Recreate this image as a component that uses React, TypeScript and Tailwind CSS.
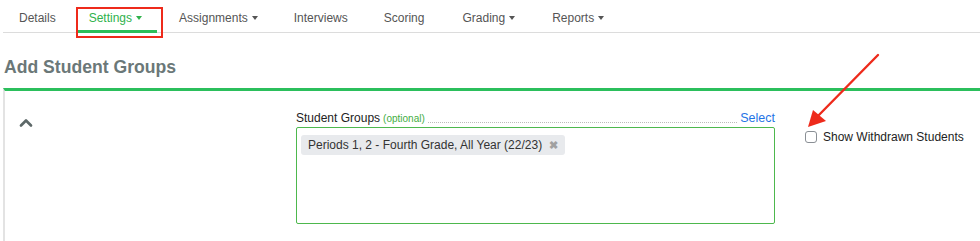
import { ChevronUp } from "lucide-react";

const TABS = [
  { label: "Details", ml: "ml-[16px]" },
  { label: "Settings", caret: true, active: true, ml: "ml-[33px]" },
  { label: "Assignments", caret: true, ml: "ml-[37px]" },
  { label: "Interviews", ml: "ml-[36px]" },
  { label: "Scoring", ml: "ml-[36px]" },
  { label: "Grading", caret: true, ml: "ml-[38px]" },
  { label: "Reports", caret: true, ml: "ml-[37px]" },
];

function Caret() {
  return (
    <span className="ml-[4px] inline-block h-0 w-0 border-x-[3.5px] border-t-[4px] border-x-transparent border-t-current align-middle" />
  );
}

export default function App() {
  return (
    <div className="relative h-[241px] w-[980px] overflow-hidden bg-white font-['Liberation_Sans',Arial,sans-serif] text-[#333]">
      {/* tabs */}
      <nav className="ml-[3px] flex h-[33px] items-start border-b border-[#dcdcdc] text-[12px] text-[#555]">
        {TABS.map((t) => (
          <div
            key={t.label}
            className={`${t.ml} flex h-[32px] items-center pt-[4px] ${
              t.active ? "relative text-[#2fb24c]" : ""
            }`}
          >
            {t.label}
            {t.caret && <Caret />}
            {t.active && (
              <span className="absolute bottom-[-1px] left-[-11px] right-[-15px] h-[3px] bg-[#2dbd5a]" />
            )}
          </div>
        ))}
      </nav>

      <h1 className="mt-[23px] ml-[4px] text-[17.6px] font-bold leading-[22px] text-[#6b7878]">
        Add Student Groups
      </h1>

      {/* card */}
      <div className="mt-[10px] ml-[3px] h-[160px] border-l-2 border-t-[3px] border-l-[#e3e3e3] border-t-[#2bbf5c]">
        <div className="flex pt-[20px]">
          <div className="w-[291px] pl-[11px] pt-[2px]">
            <ChevronUp size={20} strokeWidth={3.2} className="text-[#5d6868]" />
          </div>

          <div className="w-[479px]">
            <div className="flex items-end text-[12px] leading-[15px]">
              <span className="text-[#222]">Student Groups</span>
              <span className="ml-[3px] text-[10px] text-[#3fae3f]">(optional)</span>
              <span className="mx-[3px] mb-[3px] flex-1 border-b border-dotted border-[#bbb]" />
              <span className="text-[12.5px] text-[#1f74e6]">Select</span>
            </div>
            <div className="mt-[1px] h-[97px] rounded-[2px] border border-[#4db84d] p-[4px]">
              <span className="inline-flex h-[20px] items-center rounded-[3px] bg-[#e8eaed] pl-[7px] pr-[7px] text-[12px] text-[#333]">
                Periods 1, 2 - Fourth Grade, All Year (22/23)
                <span className="ml-[7px] text-[11px] font-bold text-[#a0a0a0]">✖</span>
              </span>
            </div>
          </div>

          <label className="ml-[30px] mt-[19px] flex h-[14px] items-center text-[12px] text-[#222]">
            <span className="mr-[6px] inline-block h-[12px] w-[12px] rounded-[3px] border border-[#8a8f95] bg-white" />
            Show Withdrawn Students
          </label>
        </div>
      </div>

      {/* annotation: red box round the Settings tab */}
      <div className="pointer-events-none absolute left-[76px] top-[7px] h-[31px] w-[87px] border-2 border-[#ee2a1b]" />

      {/* annotation: red arrow */}
      <svg
        className="pointer-events-none absolute left-0 top-0"
        width="980"
        height="241"
        viewBox="0 0 980 241"
      >
        <line x1="878" y1="55" x2="814" y2="120" stroke="#ee2a1b" strokeWidth="2.4" strokeLinecap="round" />
        <polygon points="808,127 813,110 826,121" fill="#ee2a1b" />
      </svg>
    </div>
  );
}
